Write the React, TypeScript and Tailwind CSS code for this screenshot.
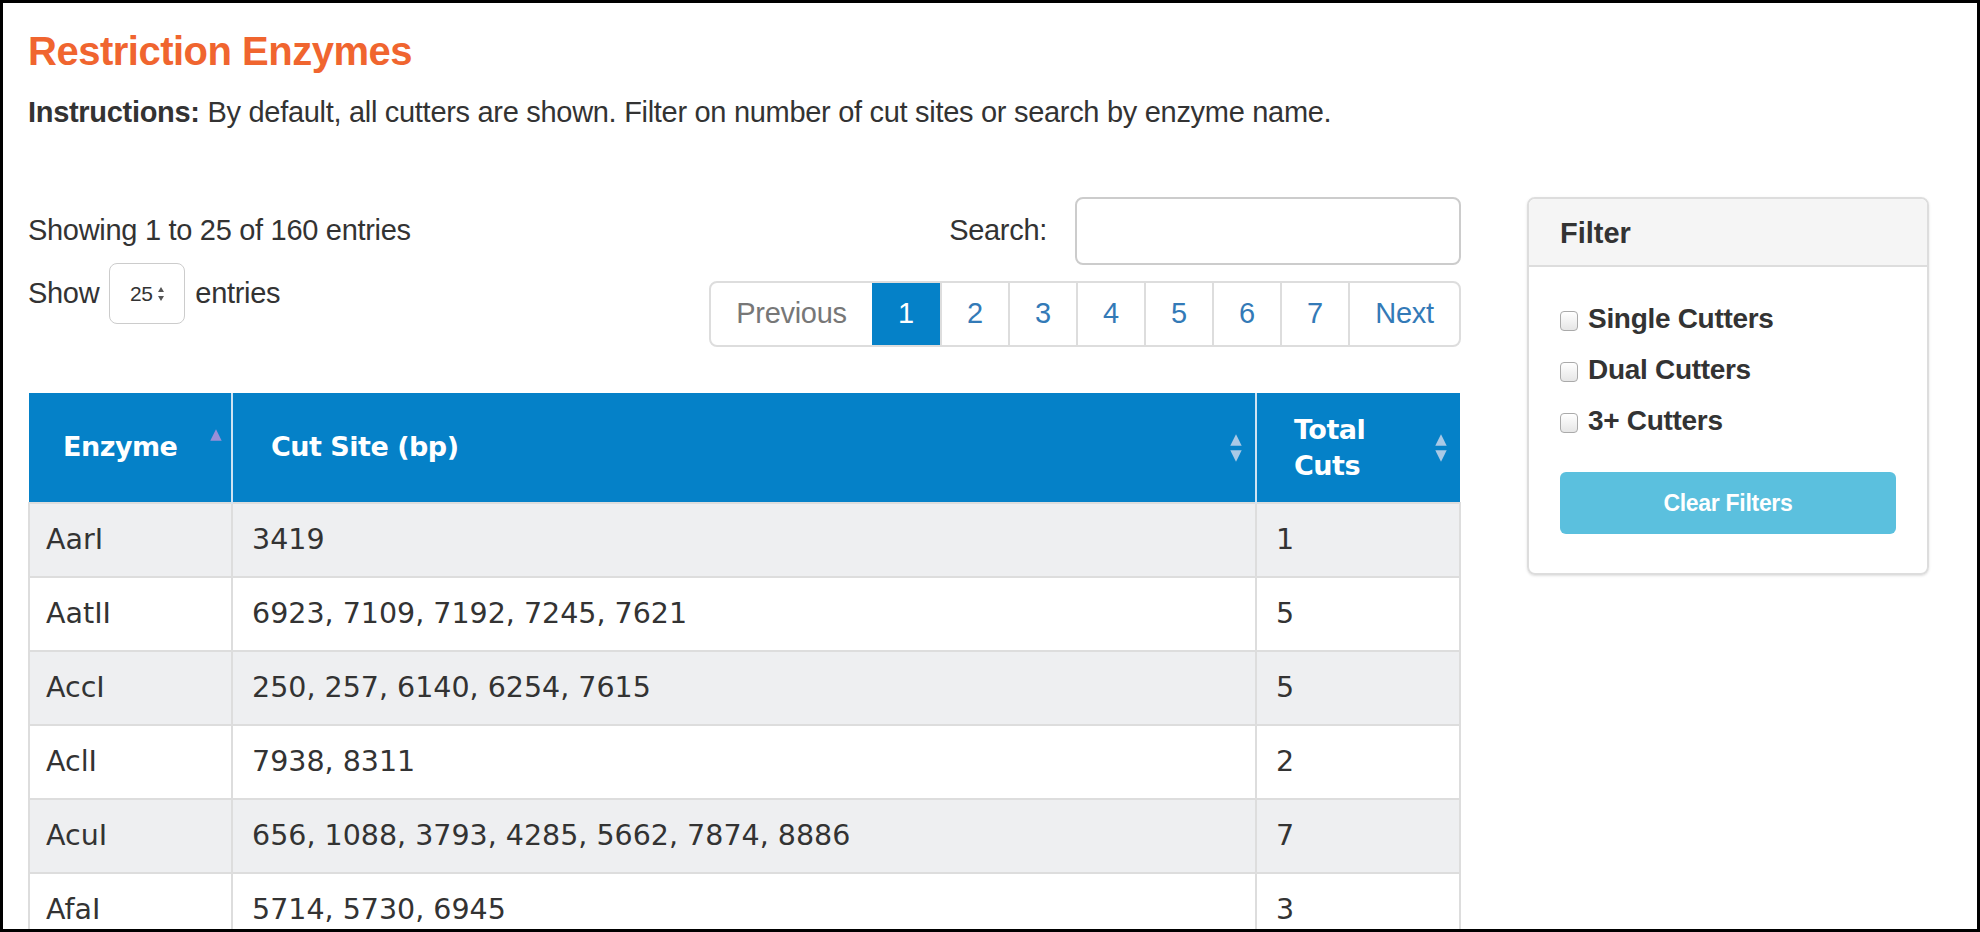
import React from "react";

const rows: [string, string, string][] = [
  ["AarI", "3419", "1"],
  ["AatII", "6923, 7109, 7192, 7245, 7621", "5"],
  ["AccI", "250, 257, 6140, 6254, 7615", "5"],
  ["AclI", "7938, 8311", "2"],
  ["AcuI", "656, 1088, 3793, 4285, 5662, 7874, 8886", "7"],
  ["AfaI", "5714, 5730, 6945", "3"],
  ["AflII", "1024", "1"],
];

function SortBoth() {
  return (
    <svg width="14" height="32" viewBox="0 0 12 28" className="shrink-0">
      <path d="M6 2 L11 12 L1 12 Z" fill="#a9c9e6" />
      <path d="M6 26 L11 16 L1 16 Z" fill="#a9c9e6" />
    </svg>
  );
}

function SortUp() {
  return (
    <svg width="14" height="32" viewBox="0 0 12 28" className="shrink-0 -mt-[10px]">
      <path d="M6 2 L11 12 L1 12 Z" fill="#9b8fd8" />
    </svg>
  );
}

export default function App() {
  const pages = ["1", "2", "3", "4", "5", "6", "7"];
  return (
    <div className="w-[1980px] h-[932px] bg-black p-[3px]" style={{ fontFamily: '"Liberation Sans", Arial, sans-serif' }}>
      <div className="w-full h-full bg-white overflow-hidden pl-[25px] pr-[48px] pt-[22px] text-[#333]">
        <h1 className="text-[40px] leading-[52px] font-bold text-[#f0652f] tracking-[-0.5px]">Restriction Enzymes</h1>
        <p className="text-[29px] leading-[34px] mt-[18px] tracking-[-0.3px]">
          <b>Instructions:</b> By default, all cutters are shown. Filter on number of cut sites or search by enzyme name.
        </p>
        <div className="flex mt-[68px] gap-[66px]">
          <div className="w-[1433px] shrink-0">
            <div className="flex justify-between">
              <div className="text-[29px] tracking-[-0.3px]">
                <div className="h-[64px] flex items-center pt-[4px]">Showing 1 to 25 of 160 entries</div>
                <div className="flex items-center gap-[10px] mt-[2px]">
                  <span>Show</span>
                  <div className="w-[76px] h-[61px] border border-[#ccc] rounded-[8px] flex items-center justify-center gap-[4px] text-[21px]">
                    25
                    <svg width="8" height="16" viewBox="0 0 8 16"><path d="M4 1 L7 6 L1 6 Z" fill="#555" /><path d="M4 15 L7 10 L1 10 Z" fill="#555" /></svg>
                  </div>
                  <span>entries</span>
                </div>
              </div>
              <div className="flex flex-col items-end">
                <div className="flex items-center gap-[28px] text-[29px] tracking-[-0.3px]">
                  <span>Search:</span>
                  <div className="w-[386px] h-[68px] border-2 border-[#ccc] rounded-[8px]" />
                </div>
                <div className="flex mt-[16px] h-[66px] border-2 border-[#ddd] rounded-[8px] text-[29px] tracking-[-0.3px] text-[#337ab7] overflow-hidden">
                  <div className="w-[161px] flex items-center justify-center text-[#777]">Previous</div>
                  {pages.map((p, i) => (
                    <div
                      key={p}
                      className={
                        i === 0
                          ? "w-[68px] flex items-center justify-center bg-[#0581c8] text-white"
                          : "w-[68px] flex items-center justify-center border-l-2 border-[#ddd]"
                      }
                    >
                      {p}
                    </div>
                  ))}
                  <div className="w-[111px] flex items-center justify-center border-l-2 border-[#ddd]">Next</div>
                </div>
              </div>
            </div>
            <table className="mt-[46px] w-full border-collapse text-[28.5px]" style={{ fontFamily: '"DejaVu Sans", Verdana, sans-serif' }}>
              <thead>
                <tr className="bg-[#0581c8] text-white h-[110px]">
                  <th className="w-[203px] text-left font-bold pl-[34px] pr-[8px] border-r-2 border-[#cfe3f2] text-[27px]">
                    <div className="flex items-center justify-between tracking-[-0.5px]">Enzyme<SortUp /></div>
                  </th>
                  <th className="text-left font-bold pl-[38px] pr-[12px] border-r-2 border-[#cfe3f2] text-[27px]">
                    <div className="flex items-center justify-between tracking-[-0.5px]">Cut Site (bp)<SortBoth /></div>
                  </th>
                  <th className="w-[204px] text-left font-bold pl-[37px] pr-[12px] text-[27px]">
                    <div className="flex items-center justify-between leading-[36px] tracking-[-0.5px]">
                      <span>Total<br />Cuts</span>
                      <SortBoth />
                    </div>
                  </th>
                </tr>
              </thead>
              <tbody>
                {rows.map((r, i) => (
                  <tr key={r[0]} className={i % 2 === 0 ? "bg-[#eeeff1] h-[74px]" : "bg-white h-[74px]"}>
                    <td className="pl-[16px] border-2 border-[#ddd]">{r[0]}</td>
                    <td className="pl-[19px] border-2 border-[#ddd]">{r[1]}</td>
                    <td className="pl-[19px] border-2 border-[#ddd]">{r[2]}</td>
                  </tr>
                ))}
              </tbody>
            </table>
          </div>
          <div className="w-[402px] h-[378px] shrink-0 border-2 border-[#ddd] rounded-[8px] overflow-hidden shadow-sm">
            <div className="h-[68px] bg-[#f5f5f5] border-b-2 border-[#ddd] flex items-center pl-[31px] text-[29px] font-bold pt-[4px]">Filter</div>
            <div className="px-[31px] pt-[26px] text-[28px] font-bold tracking-[-0.3px]">
              {["Single Cutters", "Dual Cutters", "3+ Cutters"].map((l) => (
                <div key={l} className="flex items-center gap-[10px] h-[51px]">
                  <div className="w-[18px] h-[20px] border border-[#aaa] rounded-[4px] bg-gradient-to-b from-white to-[#e6e6e6] mt-[4px]" />
                  <span>{l}</span>
                </div>
              ))}
              <div className="mt-[26px] h-[62px] bg-[#5bc0de] rounded-[6px] flex items-center justify-center text-white text-[23px] font-bold">Clear Filters</div>
            </div>
          </div>
        </div>
      </div>
    </div>
  );
}
